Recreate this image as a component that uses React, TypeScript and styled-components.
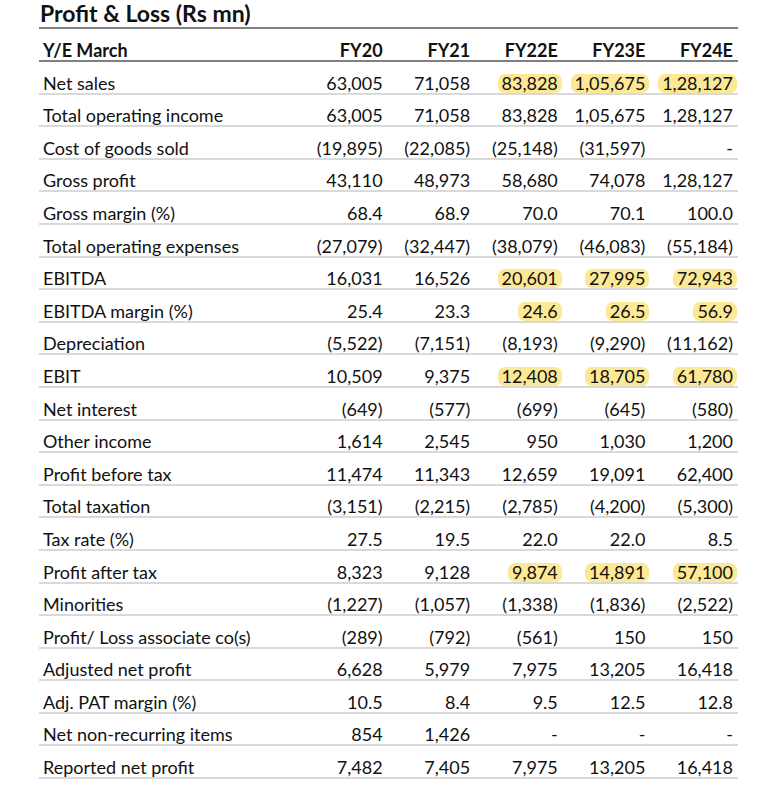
import React from "react";
import styled, { createGlobalStyle } from "styled-components";

const Global = createGlobalStyle`
  html, body { margin: 0; padding: 0; background: #fff; }
  body { font-family: Lato, "Open Sans", Arial, sans-serif; color: #111; }
`;

const Page = styled.div`
  padding: 0 0 0 39px;
  width: 699px;
`;

const Title = styled.h1`
  margin: 0;
  height: 27px;
  line-height: 27px;
  font-size: 23px;
  font-weight: 700;
  padding-left: 1px;
  border-bottom: 2px solid #808080;
  color: #111;
`;

const Row = styled.div<{ $header?: boolean }>`
  display: grid;
  grid-template-columns: 261px repeat(5, 1fr);
  align-items: end;
  height: ${(p) => (p.$header ? "31px" : "30.6px")};
  border-bottom: 2px solid ${(p) => (p.$header ? "#808080" : "#d9d9d9")};
  font-size: 18px;
  font-weight: ${(p) => (p.$header ? 700 : 400)};
`;

const Label = styled.div`
  padding: 0 0 0 4px;
  line-height: 19px;
  white-space: nowrap;
`;

const Cell = styled.div`
  padding: 0 5px 0 0;
  line-height: 19px;
  text-align: right;
  white-space: nowrap;
`;

const Mark = styled.span`
  display: inline-block;
  background: #fde896;
  border-radius: 7px;
  padding: 0 4px;
  margin-right: -4px;
`;

type R = [string, string[], boolean?];

const rows: R[] = [
  ["Net sales", ["63,005", "71,058", "83,828", "1,05,675", "1,28,127"], true],
  ["Total operating income", ["63,005", "71,058", "83,828", "1,05,675", "1,28,127"]],
  ["Cost of goods sold", ["(19,895)", "(22,085)", "(25,148)", "(31,597)", "-"]],
  ["Gross profit", ["43,110", "48,973", "58,680", "74,078", "1,28,127"]],
  ["Gross margin (%)", ["68.4", "68.9", "70.0", "70.1", "100.0"]],
  ["Total operating expenses", ["(27,079)", "(32,447)", "(38,079)", "(46,083)", "(55,184)"]],
  ["EBITDA", ["16,031", "16,526", "20,601", "27,995", "72,943"], true],
  ["EBITDA margin (%)", ["25.4", "23.3", "24.6", "26.5", "56.9"], true],
  ["Depreciation", ["(5,522)", "(7,151)", "(8,193)", "(9,290)", "(11,162)"]],
  ["EBIT", ["10,509", "9,375", "12,408", "18,705", "61,780"], true],
  ["Net interest", ["(649)", "(577)", "(699)", "(645)", "(580)"]],
  ["Other income", ["1,614", "2,545", "950", "1,030", "1,200"]],
  ["Profit before tax", ["11,474", "11,343", "12,659", "19,091", "62,400"]],
  ["Total taxation", ["(3,151)", "(2,215)", "(2,785)", "(4,200)", "(5,300)"]],
  ["Tax rate (%)", ["27.5", "19.5", "22.0", "22.0", "8.5"]],
  ["Profit after tax", ["8,323", "9,128", "9,874", "14,891", "57,100"], true],
  ["Minorities", ["(1,227)", "(1,057)", "(1,338)", "(1,836)", "(2,522)"]],
  ["Profit/ Loss associate co(s)", ["(289)", "(792)", "(561)", "150", "150"]],
  ["Adjusted net profit", ["6,628", "5,979", "7,975", "13,205", "16,418"]],
  ["Adj. PAT margin (%)", ["10.5", "8.4", "9.5", "12.5", "12.8"]],
  ["Net non-recurring items", ["854", "1,426", "-", "-", "-"]],
  ["Reported net profit", ["7,482", "7,405", "7,975", "13,205", "16,418"]],
];

const years = ["FY20", "FY21", "FY22E", "FY23E", "FY24E"];

export default function App() {
  return (
    <>
      <Global />
      <Page>
        <Title>Profit &amp; Loss (Rs mn)</Title>
        <Row $header>
          <Label>Y/E March</Label>
          {years.map((y) => (
            <Cell key={y}>{y}</Cell>
          ))}
        </Row>
        {rows.map(([label, vals, hl]) => (
          <Row key={label}>
            <Label>{label}</Label>
            {vals.map((v, i) => (
              <Cell key={i}>{hl && i >= 2 ? <Mark>{v}</Mark> : v}</Cell>
            ))}
          </Row>
        ))}
      </Page>
    </>
  );
}
